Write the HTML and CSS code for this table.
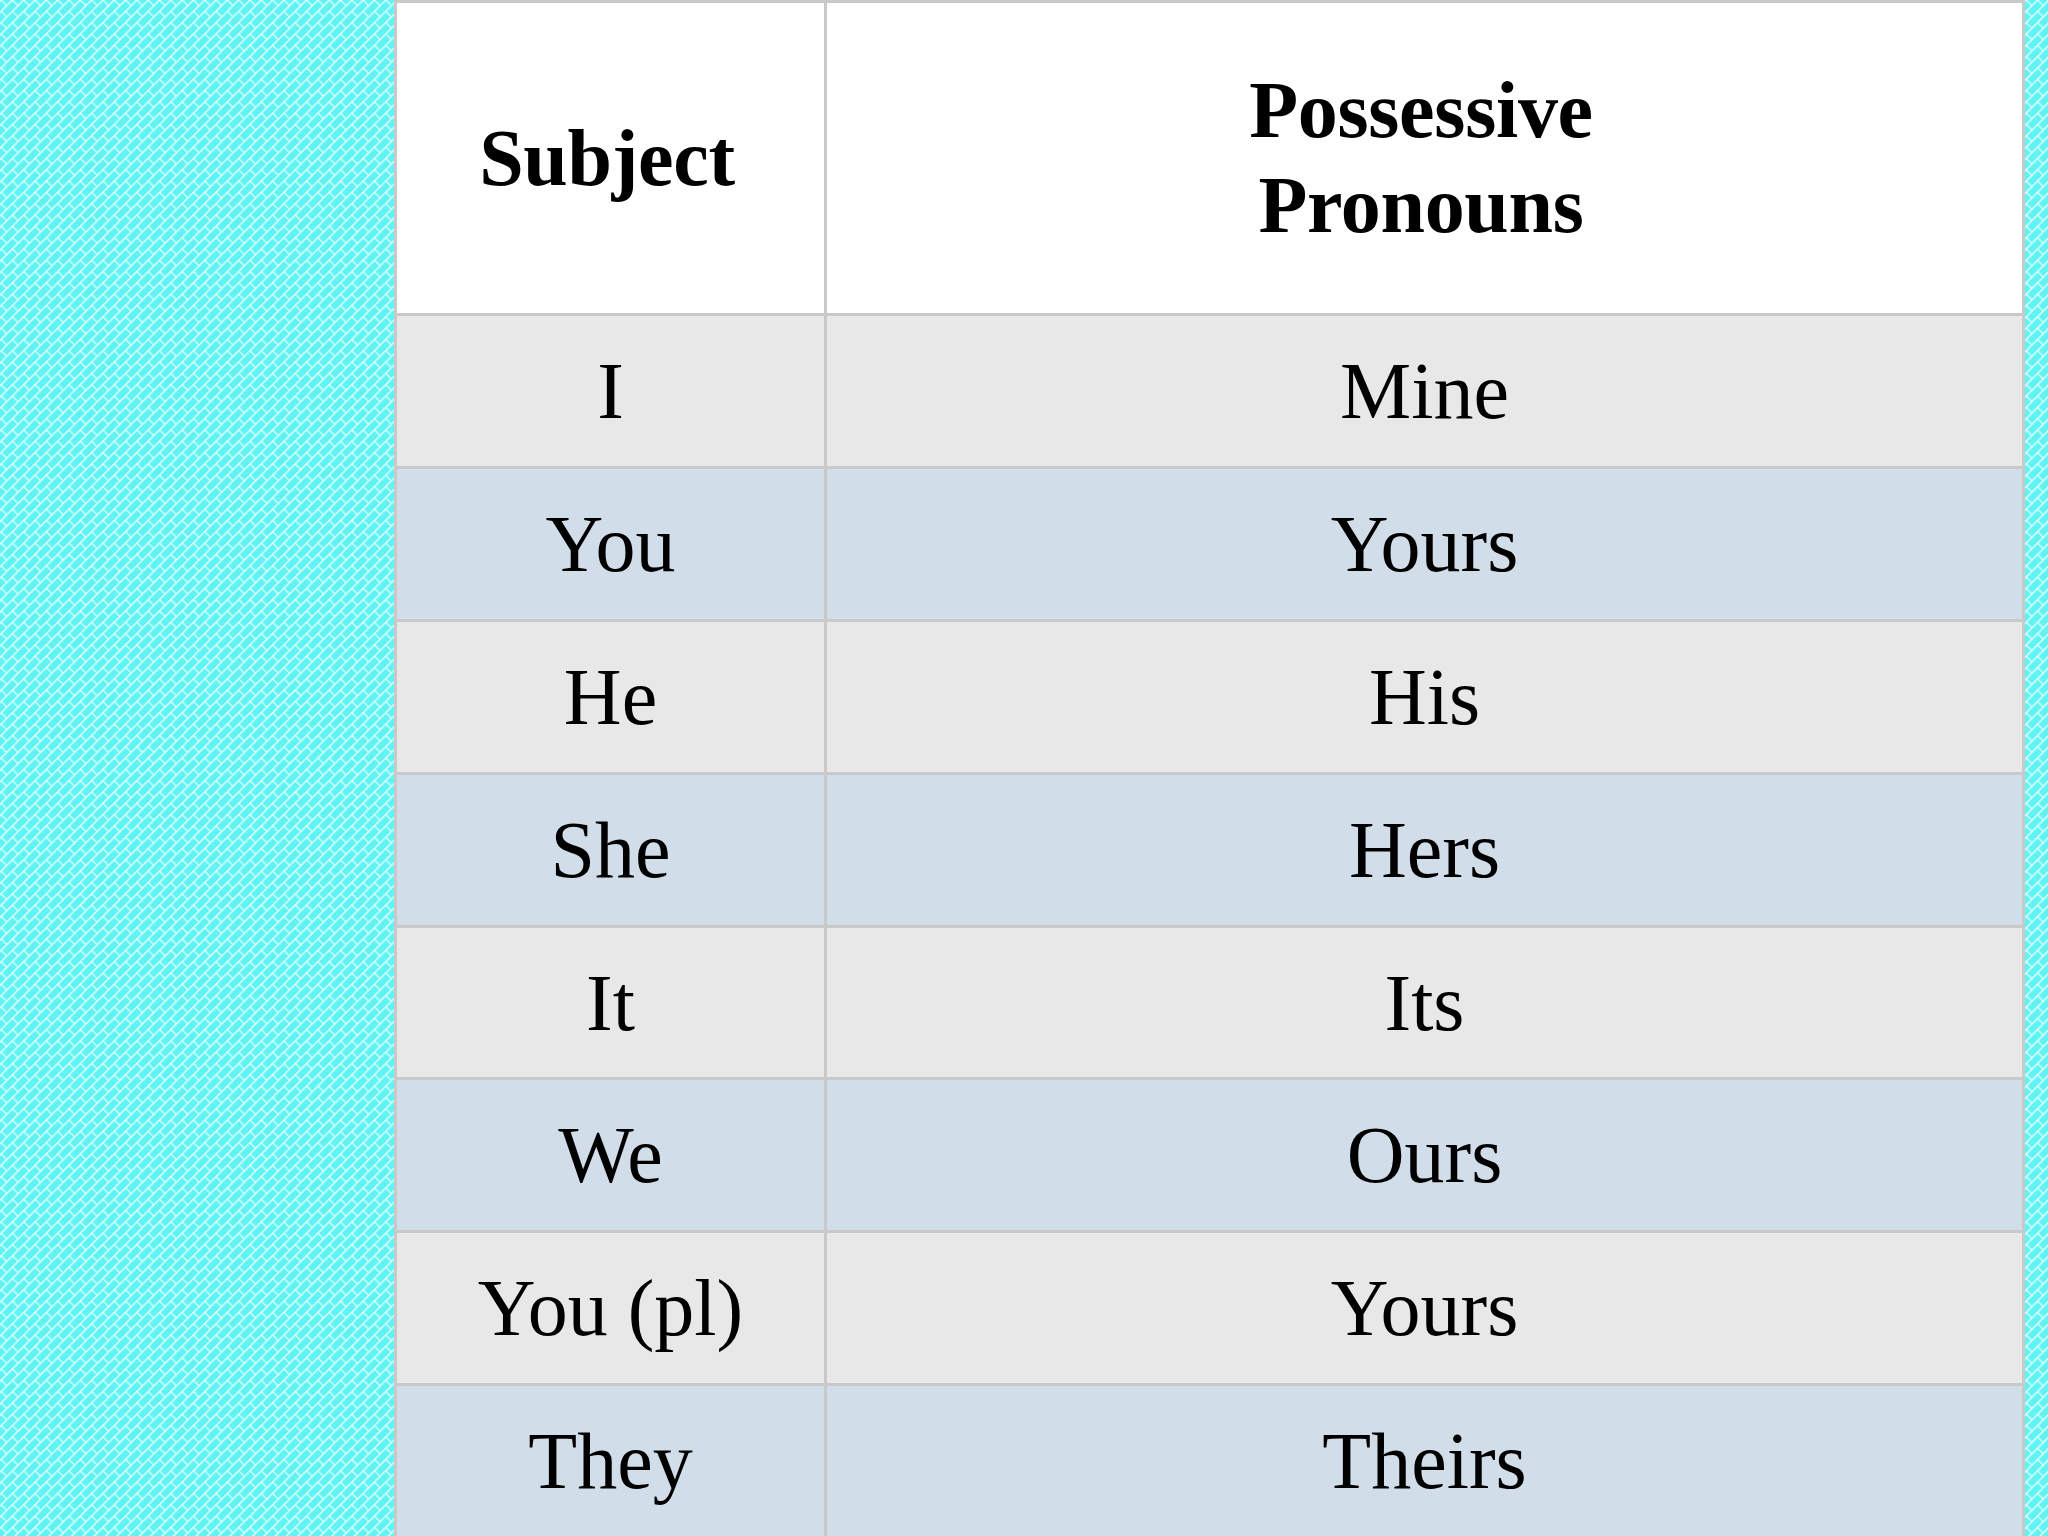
FILE: index.html
```html
<!DOCTYPE html>
<html lang="en">
<head>
<meta charset="utf-8">
<title>Possessive Pronouns</title>
<link rel="stylesheet" href="styles.css">
</head>
<body>
<main class="slide">
  <table class="pronouns">
    <colgroup>
      <col class="col-subject">
      <col class="col-possessive">
    </colgroup>
    <thead>
      <tr class="head-row">
        <th>Subject</th>
        <th>Possessive<br>Pronouns</th>
      </tr>
    </thead>
    <tbody>
      <tr class="row-odd"><td>I</td><td>Mine</td></tr>
      <tr class="row-even"><td>You</td><td>Yours</td></tr>
      <tr class="row-odd"><td>He</td><td>His</td></tr>
      <tr class="row-even"><td>She</td><td>Hers</td></tr>
      <tr class="row-odd"><td>It</td><td>Its</td></tr>
      <tr class="row-even"><td>We</td><td>Ours</td></tr>
      <tr class="row-odd"><td>You (pl)</td><td>Yours</td></tr>
      <tr class="row-even"><td>They</td><td>Theirs</td></tr>
    </tbody>
  </table>
</main>
</body>
</html>
```
FILE: styles.css
```css
html, body {
  margin: 0;
  padding: 0;
}

body {
  width: 2048px;
  height: 1536px;
  overflow: hidden;
  background-color: #5ff3f3;
  background-image: url("data:image/svg+xml,%3Csvg xmlns='http://www.w3.org/2000/svg' width='2048' height='1536'%3E%3Cdefs%3E%3Cpattern id='p' width='16' height='16' patternUnits='userSpaceOnUse' patternTransform='rotate(-45)'%3E%3Crect width='16' height='16' fill='%235ff3f3'/%3E%3Cpath d='M0 0.75H16M0 8.75H16M0.75 0.75V8.75M8.75 8.75V16.75' stroke='white' stroke-width='1.3' stroke-opacity='0.8' fill='none'/%3E%3C/pattern%3E%3C/defs%3E%3Crect width='2048' height='1536' fill='url(%23p)'/%3E%3C/svg%3E");
  font-family: "Liberation Serif", "Times New Roman", serif;
  color: #000;
}

.slide {
  display: flex;
  padding-left: 394px;
  height: 1536px;
  box-sizing: border-box;
}

.pronouns {
  width: 1631px;
  height: 1536px;
  border-collapse: collapse;
  table-layout: fixed;
}

.col-subject {
  width: 430px;
}

.pronouns th,
.pronouns td {
  border: 3px solid #c9c9c9;
  text-align: center;
  vertical-align: middle;
  padding: 0;
  font-size: 80px;
}

.pronouns th {
  font-weight: bold;
  line-height: 95px;
  padding-right: 7px;
  letter-spacing: -0.3px;
  background: #ffffff;
}

.head-row {
  height: 313px;
}

.pronouns td {
  font-weight: normal;
  line-height: 1;
}

.row-odd,
.row-even {
  height: 152.9px;
}

.row-odd td {
  background: #e8e8e8;
}

.row-even td {
  background: #d1dde8;
}
```
